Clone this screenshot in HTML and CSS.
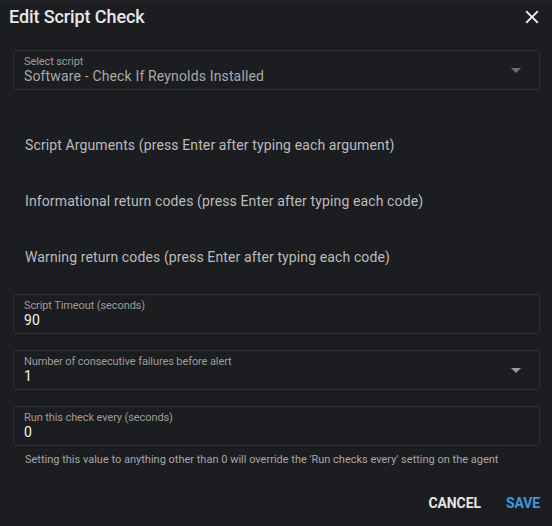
FILE: index.html
```html
<!DOCTYPE html>
<html lang="en">
<head>
<meta charset="utf-8">
<title>Edit Script Check</title>
<link rel="stylesheet" href="styles.css">
</head>
<body>
<div class="dialog">
  <div class="header">
    <div class="title">Edit Script Check</div>
    <button class="close" aria-label="Close">
      <svg viewBox="0 0 24 24" width="22" height="22"><path fill="currentColor" d="M19 6.41L17.59 5 12 10.59 6.41 5 5 6.41 10.59 12 5 17.59 6.41 19 12 13.41 17.59 19 19 17.59 13.41 12z"/></svg>
    </button>
  </div>
  <div class="body">
    <div class="field field-first disabled">
      <div class="field-inner">
        <div class="label">Select script</div>
        <div class="value">Software - Check If Reynolds Installed</div>
      </div>
      <svg class="arrow" viewBox="0 0 24 24" width="24" height="24"><path fill="currentColor" d="M7 10l5 5 5-5z"/></svg>
    </div>
    <div class="chips">
      <div class="chip-field">Script Arguments (press Enter after typing each argument)</div>
      <div class="chip-field">Informational return codes (press Enter after typing each code)</div>
      <div class="chip-field">Warning return codes (press Enter after typing each code)</div>
    </div>
    <div class="stack">
      <div class="field">
        <div class="field-inner">
          <div class="label">Script Timeout (seconds)</div>
          <div class="value">90</div>
        </div>
      </div>
      <div class="field">
        <div class="field-inner">
          <div class="label">Number of consecutive failures before alert</div>
          <div class="value">1</div>
        </div>
        <svg class="arrow" viewBox="0 0 24 24" width="24" height="24"><path fill="currentColor" d="M7 10l5 5 5-5z"/></svg>
      </div>
      <div class="field-wrap">
        <div class="field">
          <div class="field-inner">
            <div class="label">Run this check every (seconds)</div>
            <div class="value">0</div>
          </div>
        </div>
        <div class="hint">Setting this value to anything other than 0 will override the 'Run checks every' setting on the agent</div>
      </div>
    </div>
  </div>
  <div class="actions">
    <button class="btn">CANCEL</button>
    <button class="btn primary">SAVE</button>
  </div>
</div>
</body>
</html>
```
FILE: styles.css
```css
html, body {
  margin: 0;
  padding: 0;
  background: #1c1d20;
}
body {
  font-family: Roboto, "Liberation Sans", Arial, sans-serif;
  color: #e6e6e6;
}
.dialog {
  width: 552px;
  height: 526px;
  background: #1c1d20;
  border-top: 1px solid #222327;
  box-sizing: border-box;
  display: flex;
  flex-direction: column;
}
.header {
  display: flex;
  align-items: center;
  justify-content: space-between;
  padding: 4px 9px 0 9px;
  height: 24px;
}
.title {
  font-size: 18px;
  font-weight: 500;
  line-height: 24px;
  color: #e8e8e8;
  letter-spacing: -0.1px;
}
.close {
  background: none;
  border: none;
  padding: 0;
  margin: 0;
  color: #f0f0f0;
  width: 22px;
  height: 22px;
  display: flex;
  cursor: pointer;
}
.body {
  padding: 21px 12px 0 13px;
  display: flex;
  flex-direction: column;
}
.field {
  height: 40px;
  box-sizing: border-box;
  border: 1px solid #303135;
  border-radius: 4px;
  display: flex;
  align-items: center;
  padding: 0 11px 0 10px;
}
.field-inner {
  flex: 1;
  display: flex;
  flex-direction: column;
}
.label {
  font-size: 11px;
  line-height: 12px;
  color: #9c9c9c;
  letter-spacing: -0.1px;
}
.value {
  font-size: 14px;
  line-height: 16px;
  color: #f2f2f2;
  font-weight: 400;
  letter-spacing: 0.2px;
}
.disabled .value {
  color: #a9a9a9;
  font-weight: 400;
  letter-spacing: 0.15px;
}
.arrow {
  color: #9a9a9a;
  flex: none;
}
.disabled .arrow {
  color: #6f7074;
}
.chips {
  display: flex;
  flex-direction: column;
  padding: 27px 0 9px 12px;
}
.chip-field {
  height: 56px;
  display: flex;
  align-items: center;
  font-size: 14px;
  color: #bcbcbc;
  letter-spacing: 0.12px;
}
.stack {
  display: flex;
  flex-direction: column;
  gap: 16px;
}
.hint {
  font-size: 11px;
  line-height: 14px;
  color: #a6a6a6;
  padding: 7px 0 0 12px;
}
.actions {
  margin-top: auto;
  display: flex;
  justify-content: flex-end;
  gap: 9px;
  padding: 0 4px 5px 0;
}
.btn {
  background: none;
  border: none;
  font-family: Roboto, "Liberation Sans", Arial, sans-serif;
  font-size: 14px;
  font-weight: 700;
  color: #e4e4e4;
  height: 36px;
  padding: 0 8px;
  letter-spacing: -0.1px;
  cursor: pointer;
}
.btn.primary {
  color: #3d97e2;
}
```
